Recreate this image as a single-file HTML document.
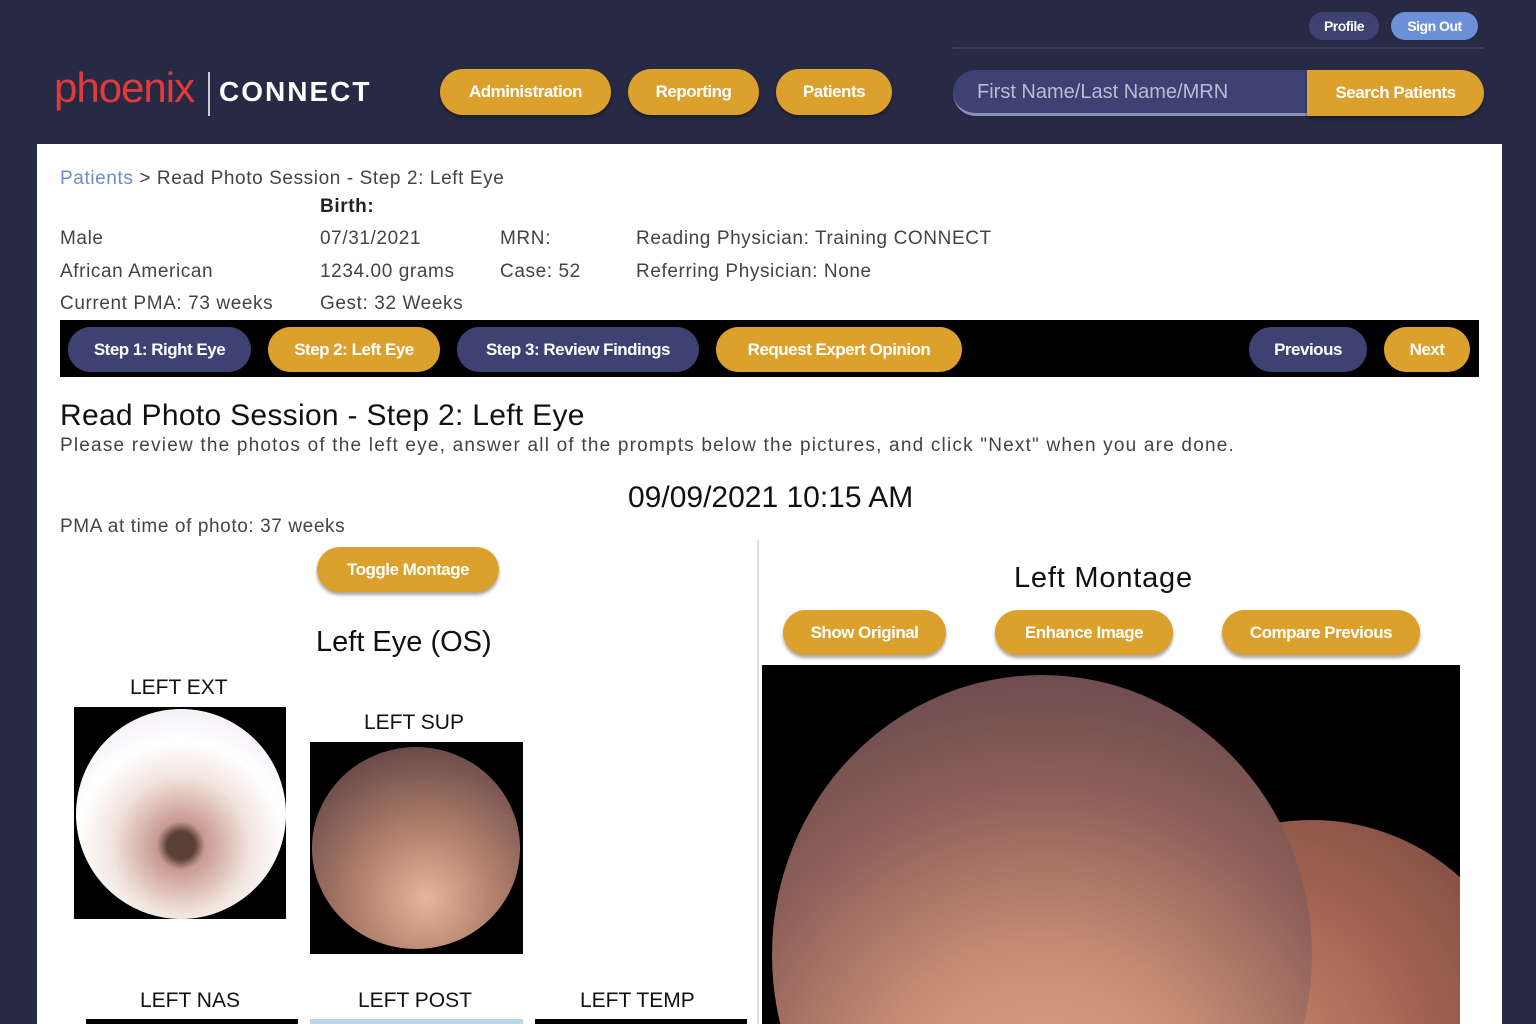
<!DOCTYPE html>
<html><head><style>
*{margin:0;padding:0;box-sizing:border-box}
html,body{width:1536px;height:1024px;overflow:hidden}
body{background:#282a45;font-family:"Liberation Sans",sans-serif;position:relative}
.a{position:absolute}
.btn{position:absolute;background:#dba12c;color:#fff;font-weight:bold;border-radius:24px;text-align:center;box-shadow:0 3px 3px rgba(0,0,0,.35);font-size:17px;letter-spacing:-0.5px}
.nb{position:absolute;background:#3e4272;color:#fff;font-weight:bold;border-radius:24px;text-align:center;font-size:17px;letter-spacing:-0.5px}
.t{position:absolute;color:#444;font-size:19px;white-space:nowrap;letter-spacing:0.6px}
.lbl{position:absolute;color:#111;font-size:21px;white-space:nowrap}
</style></head><body>
<div class="a" style="left:54px;top:64px;color:#e03a3a;font-size:42px;letter-spacing:-1px">phoenix</div>
<div class="a" style="left:208px;top:72px;width:2px;height:44px;background:#ccc"></div>
<div class="a" style="left:219px;top:76px;color:#fff;font-size:28px;font-weight:bold;letter-spacing:2px">CONNECT</div>
<div class="btn" style="left:440px;top:69px;width:171px;height:46px;line-height:46px">Administration</div>
<div class="btn" style="left:628px;top:69px;width:131px;height:46px;line-height:46px">Reporting</div>
<div class="btn" style="left:776px;top:69px;width:116px;height:46px;line-height:46px">Patients</div>
<div class="nb" style="left:1309px;top:12px;width:70px;height:28px;line-height:28px;font-size:14px">Profile</div>
<div class="nb" style="left:1391px;top:12px;width:87px;height:28px;line-height:28px;font-size:14px;background:#6d8fd8">Sign Out</div>
<div class="a" style="left:953px;top:47px;width:531px;height:2px;background:#3a3d5e"></div>
<div class="a" style="left:953px;top:70px;width:360px;height:46px;background:#3e4272;border-radius:24px 0 0 24px;border-bottom:3px solid #8a90b8;color:#b9bcd6;font-size:20px;line-height:44px;padding-left:24px">First Name/Last Name/MRN</div>
<div class="btn" style="left:1307px;top:70px;width:177px;height:46px;line-height:46px;border-radius:0 24px 24px 0">Search Patients</div>
<div class="a" style="left:37px;top:144px;width:1465px;height:880px;background:#fff"></div>
<div class="t" style="left:60px;top:168px"><span style="color:#6d8ad0">Patients</span> &gt; Read Photo Session - Step 2: Left Eye</div>
<div class="t" style="left:320px;top:196px;color:#222;font-weight:bold">Birth:</div>
<div class="t" style="left:60px;top:228px">Male</div>
<div class="t" style="left:60px;top:261px">African American</div>
<div class="t" style="left:60px;top:293px">Current PMA: 73 weeks</div>
<div class="t" style="left:320px;top:228px">07/31/2021</div>
<div class="t" style="left:320px;top:261px">1234.00 grams</div>
<div class="t" style="left:320px;top:293px">Gest: 32 Weeks</div>
<div class="t" style="left:500px;top:228px">MRN:</div>
<div class="t" style="left:500px;top:261px">Case: 52</div>
<div class="t" style="left:636px;top:228px">Reading Physician: Training CONNECT</div>
<div class="t" style="left:636px;top:261px">Referring Physician: None</div>
<div class="a" style="left:60px;top:320px;width:1419px;height:57px;background:#000"></div>
<div class="nb" style="left:68px;top:327px;width:183px;height:45px;line-height:45px">Step 1: Right Eye</div>
<div class="btn" style="left:268px;top:327px;width:172px;height:45px;line-height:45px">Step 2: Left Eye</div>
<div class="nb" style="left:457px;top:327px;width:242px;height:45px;line-height:45px">Step 3: Review Findings</div>
<div class="btn" style="left:716px;top:327px;width:246px;height:45px;line-height:45px">Request Expert Opinion</div>
<div class="nb" style="left:1249px;top:327px;width:118px;height:45px;line-height:45px">Previous</div>
<div class="btn" style="left:1384px;top:327px;width:86px;height:45px;line-height:45px">Next</div>
<div class="lbl" style="left:60px;top:399px;font-size:30px;letter-spacing:0.3px">Read Photo Session - Step 2: Left Eye</div>
<div class="t" style="left:60px;top:435px;letter-spacing:1.2px">Please review the photos of the left eye, answer all of the prompts below the pictures, and click "Next" when you are done.</div>
<div class="lbl" style="left:628px;top:481px;font-size:30px">09/09/2021 10:15 AM</div>
<div class="t" style="left:60px;top:516px">PMA at time of photo: 37 weeks</div>
<div class="btn" style="left:317px;top:547px;width:182px;height:45px;line-height:45px">Toggle Montage</div>
<div class="lbl" style="left:316px;top:626px;font-size:29px">Left Eye (OS)</div>
<div class="lbl" style="left:130px;top:676px">LEFT EXT</div>
<div class="a" style="left:74px;top:707px;width:212px;height:212px;background:#000"><div style="position:absolute;left:2px;top:2px;width:210px;height:210px;border-radius:50%;background:radial-gradient(circle at 50% 65%,#5a4035 0 8%,#c89a90 14%,#f2e4de 40%,#fff 60%,#ece0f0 100%)"></div></div>
<div class="lbl" style="left:364px;top:711px">LEFT SUP</div>
<div class="a" style="left:310px;top:742px;width:213px;height:212px;background:#000"><div style="position:absolute;left:2px;top:5px;width:208px;height:202px;border-radius:50%;background:radial-gradient(circle at 55% 75%,#e6b59a 0,#b3826c 35%,#6a4a4a 80%,#4e3a44 100%)"></div></div>
<div class="lbl" style="left:140px;top:989px">LEFT NAS</div>
<div class="lbl" style="left:358px;top:989px">LEFT POST</div>
<div class="lbl" style="left:580px;top:989px">LEFT TEMP</div>
<div class="a" style="left:86px;top:1019px;width:212px;height:5px;background:#000"></div>
<div class="a" style="left:310px;top:1019px;width:213px;height:5px;background:#bcd8e8"></div>
<div class="a" style="left:535px;top:1019px;width:212px;height:5px;background:#000"></div>
<div class="a" style="left:757px;top:540px;width:2px;height:484px;background:#ddd"></div>
<div class="lbl" style="left:1014px;top:562px;font-size:29px;letter-spacing:0.8px">Left Montage</div>
<div class="btn" style="left:783px;top:610px;width:163px;height:45px;line-height:45px">Show Original</div>
<div class="btn" style="left:995px;top:610px;width:178px;height:45px;line-height:45px">Enhance Image</div>
<div class="btn" style="left:1222px;top:610px;width:198px;height:45px;line-height:45px">Compare Previous</div>
<div class="a" style="left:762px;top:665px;width:698px;height:359px;background:#000;overflow:hidden">
<div class="a" style="left:330px;top:155px;width:440px;height:440px;border-radius:50%;background:radial-gradient(circle at 35% 55%,#c98a70 0,#a0624f 50%,#6e4440 100%)"></div>
<div class="a" style="left:10px;top:10px;width:540px;height:560px;border-radius:50%;background:radial-gradient(circle at 50% 80%,#e4ab8c 0,#c48a72 35%,#8c5e58 65%,#5a4048 100%)"></div>
</div>
</body></html>
